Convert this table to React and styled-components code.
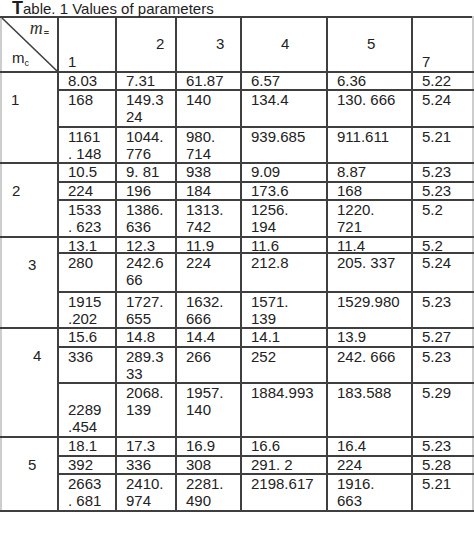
import React from 'react'
import styled, { createGlobalStyle } from 'styled-components'

const GlobalStyle = createGlobalStyle`
  body {
    margin: 0;
    background: #fff;
    font-family: "Liberation Sans", Arial, sans-serif;
    color: #222;
  }
`

const LINE = '#3f3f3f'
const EDGE = '#cdcdcd'

const groups = [
  {
    label: '1', indent: 9,
    rows: [
      { h: 18, cells: ['8.03', '7.31', '61.87', '6.57', '6.36', '5.22'] },
      { h: 37, cells: ['168', ['149.3', '24'], '140', '134.4', '130. 666', '5.24'] },
      { h: 36, cells: [['1161', '. 148'], ['1044.', '776'], ['980.', '714'], '939.685', '911.611', '5.21'] },
    ],
  },
  {
    label: '2', indent: 10,
    rows: [
      { h: 19, cells: ['10.5', '9. 81', '938', '9.09', '8.87', '5.23'] },
      { h: 18, cells: ['224', '196', '184', '173.6', '168', '5.23'] },
      { h: 37, cells: [['1533', '. 623'], ['1386.', '636'], ['1313.', '742'], ['1256.', '194'], ['1220.', '721'], '5.2'] },
    ],
  },
  {
    label: '3', indent: 26,
    rows: [
      { h: 16, cells: ['13.1', '12.3', '11.9', '11.6', '11.4', '5.2'] },
      { h: 39, cells: ['280', ['242.6', '66'], '224', '212.8', '205. 337', '5.24'] },
      { h: 36, cells: [['1915', '.202'], ['1727.', '655'], ['1632.', '666'], ['1571.', '139'], '1529.980', '5.23'] },
    ],
  },
  {
    label: '4', indent: 31,
    rows: [
      { h: 19, cells: ['15.6', '14.8', '14.4', '14.1', '13.9', '5.27'] },
      { h: 36, cells: ['336', ['289.3', '33'], '266', '252', '242. 666', '5.23'] },
      { h: 54, cells: [['\u00a0', '2289', '.454'], ['2068.', '139'], ['1957.', '140'], '1884.993', '183.588', '5.29'] },
    ],
  },
  {
    label: '5', indent: 26,
    rows: [
      { h: 19, cells: ['18.1', '17.3', '16.9', '16.6', '16.4', '5.23'] },
      { h: 18, cells: ['392', '336', '308', '291. 2', '224', '5.28'] },
      { h: 37, cells: [['2663', '. 681'], ['2410.', '974'], ['2281.', '490'], '2198.617', ['1916.', '663'], '5.21'] },
    ],
  },
]

const headers = [
  { text: '1', pos: 'low' },
  { text: '2', pos: 'mid' },
  { text: '3', pos: 'mid' },
  { text: '4', pos: 'mid' },
  { text: '5', pos: 'mid' },
  { text: '7', pos: 'low' },
]

const colWidths = [57, 58, 60, 65, 86, 85, 61]

// a row is "single" when none of its cells wraps onto a second line
const isSingle = (row) => row.cells.every((c) => !Array.isArray(c))

const App = () => {
  return (
    <>
      <GlobalStyle />
      <Page>
        <Title><DropCap>T</DropCap>able. 1 Values of parameters</Title>
        <Grid>
          <colgroup>
            {colWidths.map((w, i) => <col key={i} style={{ width: w }} />)}
          </colgroup>
          <thead>
            <HeadRow>
              <Corner>
                <Diagonal viewBox="0 0 100 100" preserveAspectRatio="none">
                  <line x1="0" y1="0" x2="100" y2="100" stroke={LINE} strokeWidth="1.6" vectorEffect="non-scaling-stroke" />
                </Diagonal>
                <Split>
                  <TopSym>m<sub>=</sub></TopSym>
                  <LowSym>m<sub>c</sub></LowSym>
                </Split>
              </Corner>
              {headers.map(({ text, pos }) => (
                <HeadCell key={text} $pos={pos}>{text}</HeadCell>
              ))}
            </HeadRow>
          </thead>
          <tbody>
            {groups.map((g) =>
              g.rows.map((row, ri) => (
                <tr key={g.label + ri} style={{ height: row.h }}>
                  {ri === 0 && (
                    <GroupCell rowSpan={3} $indent={g.indent}>{g.label}</GroupCell>
                  )}
                  {row.cells.map((c, ci) => (
                    <DataCell key={ci} $single={isSingle(row)}>
                      {Array.isArray(c)
                        ? c.map((line, li) => (
                            <React.Fragment key={li}>
                              {li > 0 && <br />}
                              {line}
                            </React.Fragment>
                          ))
                        : c}
                    </DataCell>
                  ))}
                </tr>
              ))
            )}
          </tbody>
        </Grid>
      </Page>
    </>
  )
}

const Page = styled.div`
  width: 474px;
  height: 534px;
  overflow: hidden;
`

const Title = styled.div`
  height: 16px;
  padding-left: 12px;
  font-size: 15px;
  line-height: 16px;
  color: #1d1d1d;
  white-space: nowrap;
`

const DropCap = styled.span`
  font-size: 18px;
  font-weight: bold;
  line-height: 16px;
`

const Grid = styled.table`
  width: 474px;
  table-layout: fixed;
  border-collapse: collapse;
  border-left: 2px solid ${EDGE};
  border-right: 2px solid ${EDGE};
  font-size: 15px;
  line-height: 17px;
  color: #222;

  td, th {
    border: 2px solid ${LINE};
  }
  tr > :first-child {
    border-left: 2px solid ${EDGE};
  }
  tr > :last-child {
    border-right: 2px solid ${EDGE};
  }
`

const HeadRow = styled.tr`
  height: 55px;
`

const Corner = styled.th`
  position: relative;
  padding: 0;
  vertical-align: top;
  font-weight: normal;
`

const Diagonal = styled.svg`
  position: absolute;
  top: 0;
  left: 0;
  width: 100%;
  height: 100%;
  overflow: visible;
`

const Split = styled.div`
  height: 53px;
  display: flex;
  flex-direction: column;
  justify-content: space-between;
`

const TopSym = styled.div`
  align-self: flex-end;
  padding: 3px 8px 0 0;
  font: italic 18px/14px "Liberation Serif", serif;
  color: #35321f;

  sub {
    font: bold 9px/9px "Liberation Sans", sans-serif;
    vertical-align: -2px;
    margin-left: 1px;
  }
`

const LowSym = styled.div`
  align-self: flex-start;
  padding: 0 0 3px 10px;
  font: 15px/15px "Liberation Sans", sans-serif;

  sub {
    font-size: 9px;
    line-height: 9px;
    vertical-align: -3px;
  }
`

const HeadCell = styled.th`
  font-weight: normal;
  text-align: left;
  white-space: nowrap;
  vertical-align: ${({ $pos }) => ($pos === 'low' ? 'bottom' : 'top')};
  padding: ${({ $pos }) => ($pos === 'low' ? '0 0 1px 9px' : '17px 0 0 39px')};
`

const GroupCell = styled.td`
  vertical-align: top;
  padding: 18px 0 0 ${({ $indent }) => $indent}px;
`

const DataCell = styled.td`
  vertical-align: top;
  padding: ${({ $single }) => ($single ? '2px 0 0 9px' : '0 0 0 9px')};
  line-height: ${({ $single }) => ($single ? '12px' : '17px')};
  white-space: nowrap;
`

export default App
